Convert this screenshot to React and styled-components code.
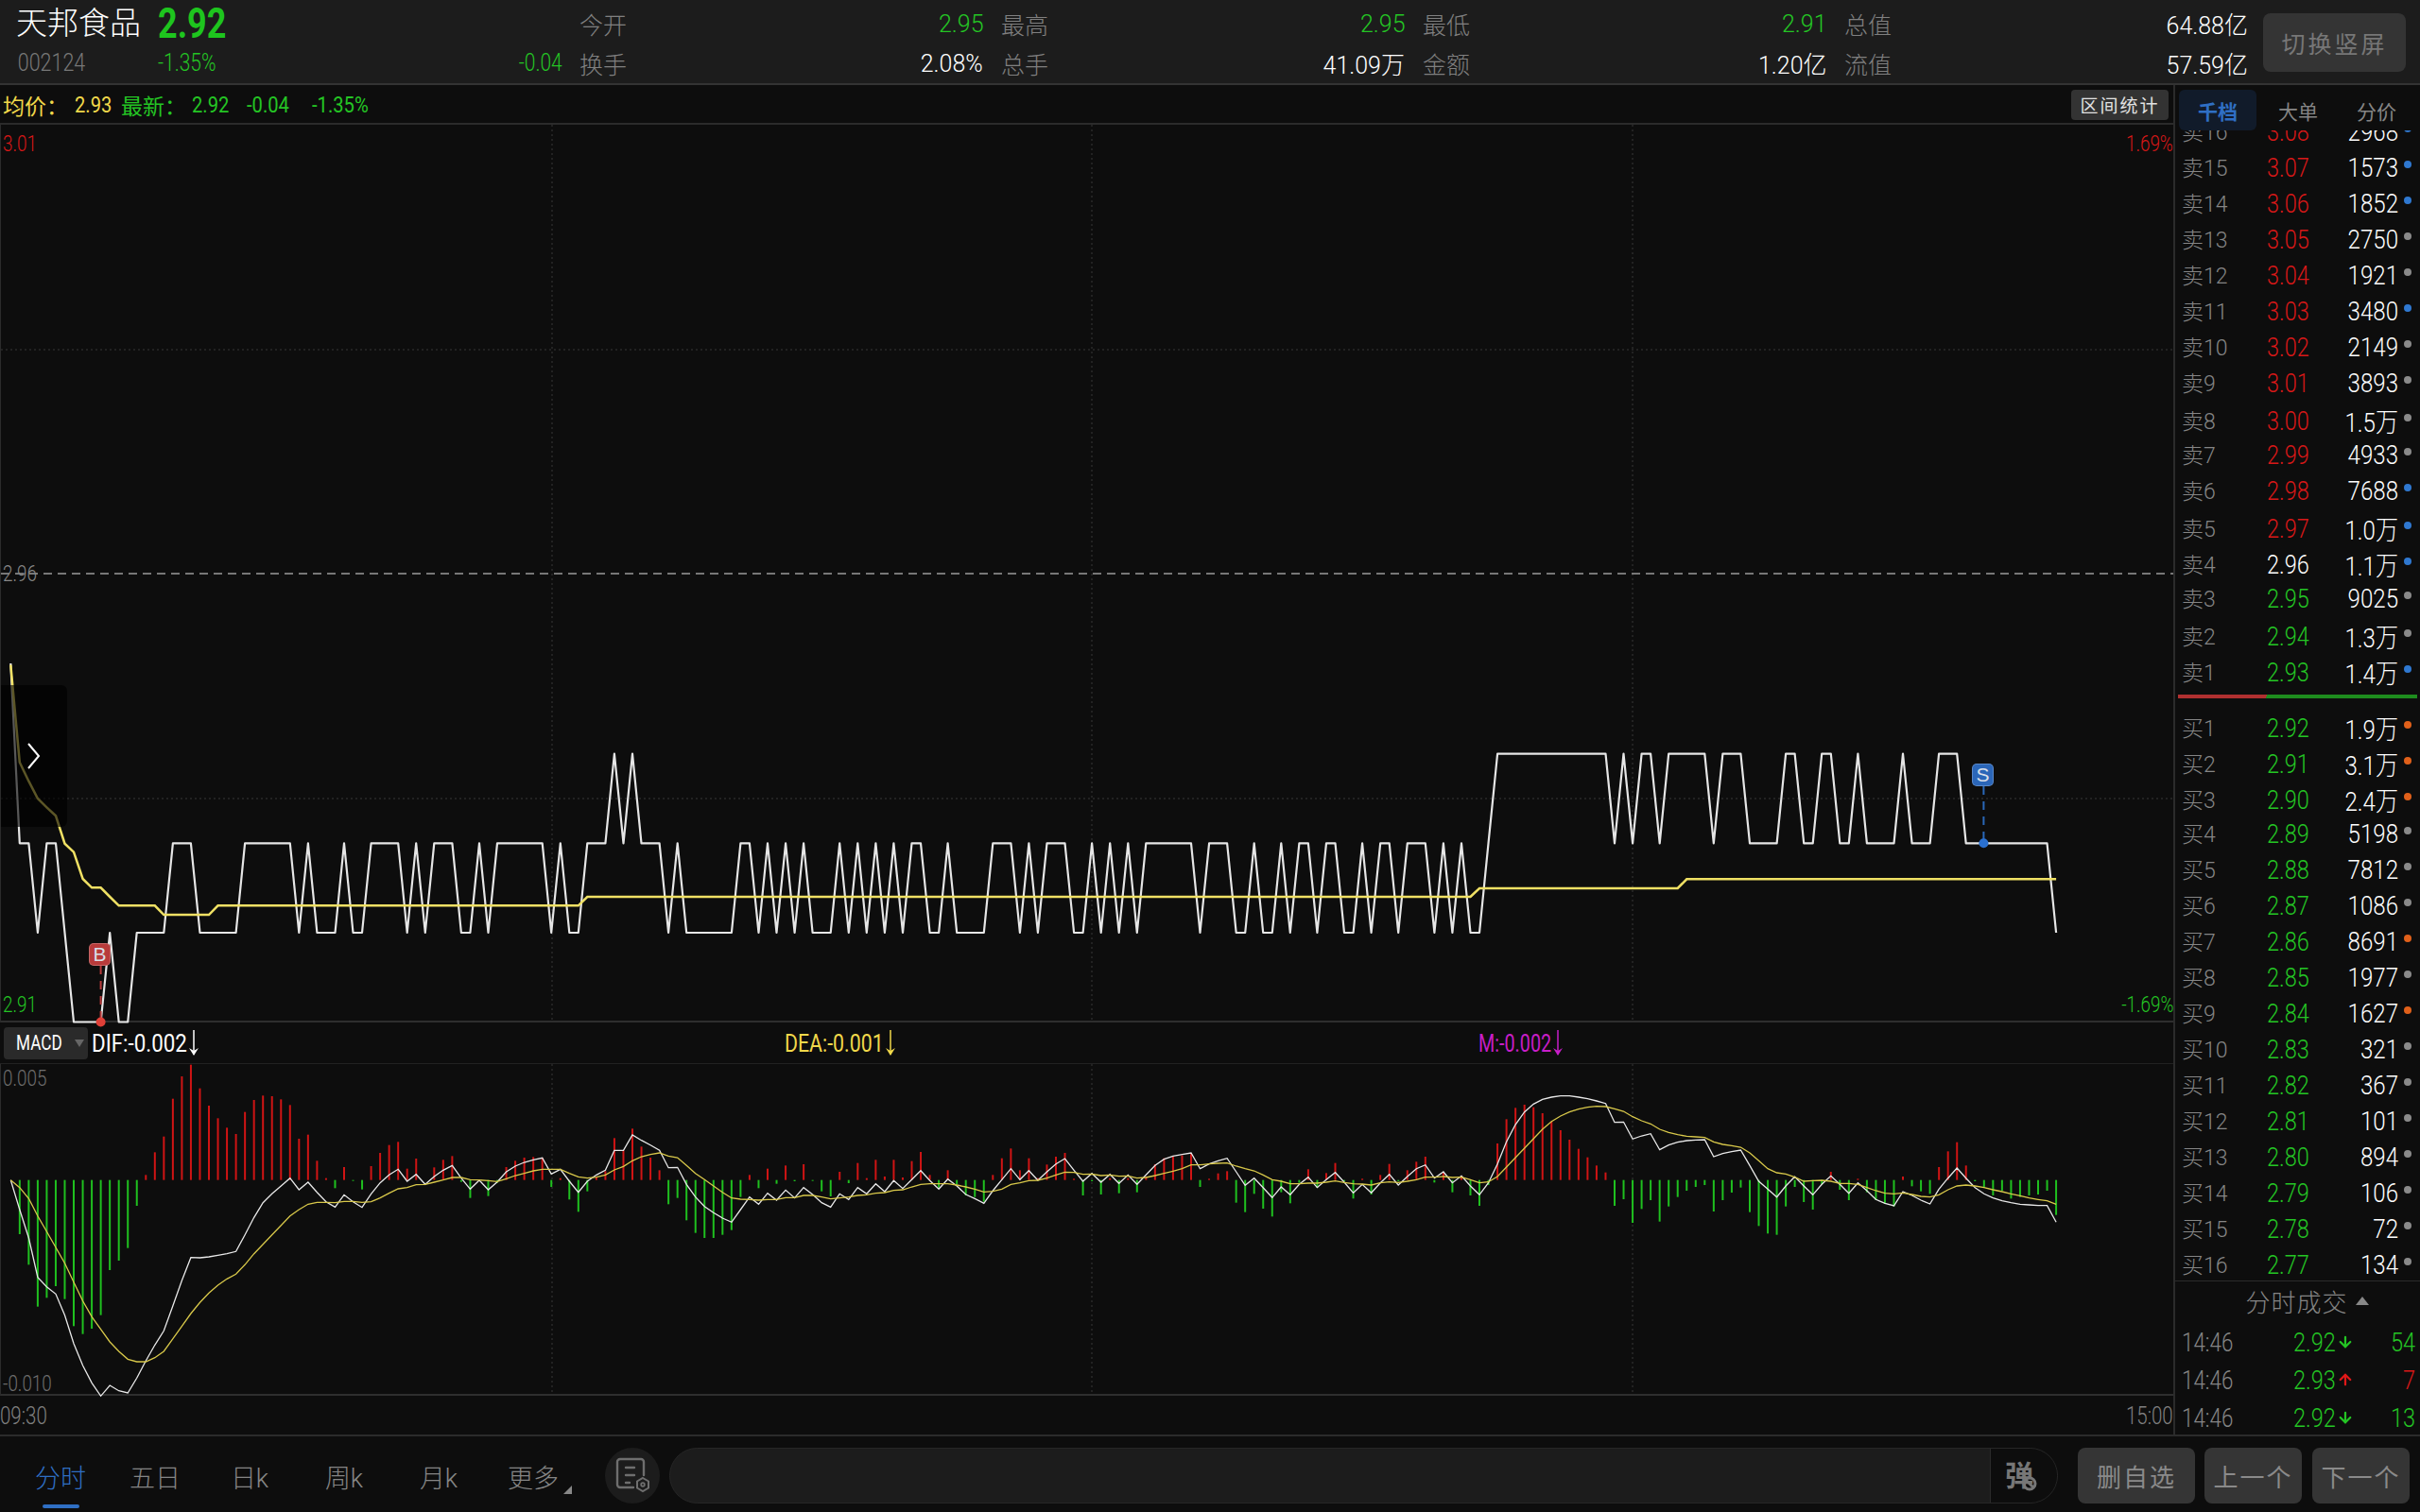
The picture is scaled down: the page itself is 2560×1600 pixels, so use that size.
import React from 'react';
import styled, { createGlobalStyle, css } from 'styled-components';
import { ArrowDown, ArrowUp } from 'lucide-react';

const FONT = 'Roboto, "Noto Sans CJK SC", sans-serif';
const GREEN = '#24c524';
const RED = '#d81818';
const GRAY = '#858585';
const BLUE = '#2f6fc4';

// the digits in this app are drawn much narrower than any installed font
const narrow = (origin = 'left', k = 0.84) => css`
  display: inline-block;
  transform: scaleX(${k});
  transform-origin: ${origin} center;
`;

const GlobalStyle = createGlobalStyle`
  html, body {
    margin: 0;
    background: #0d0d0d;
  }
  * {
    box-sizing: border-box;
  }
`;

const Page = styled.div`
  width: 2560px;
  height: 1600px;
  display: flex;
  flex-direction: column;
  overflow: hidden;
  background: #0d0d0d;
  color: #fff;
  font-family: ${FONT};
  font-weight: 300;
`;

/* top quote header */
const Header = styled.header`
  height: 90px;
  flex: none;
  display: flex;
  background: #1c1c1c;
  border-bottom: 2px solid #333;
`;

const NameBlock = styled.div`
  width: 613px;
  padding: 0 18px 0 17px;
  display: grid;
  grid-template-columns: 150px 1fr auto;
  grid-template-rows: 49px 35px;
  align-items: center;
`;

const StockName = styled.div`
  font-size: 33px;
  line-height: 1;
  white-space: nowrap;
`;

const BigPrice = styled.div`
  ${narrow('left', 0.8)}
  font-size: 45px;
  font-weight: 700;
  line-height: 1;
  color: #1ec51e;
  grid-column: 2 / 4;
`;

const Code = styled.div`
  ${narrow('left', 0.86)}
  font-size: 25px;
  color: #777;
  padding-left: 2px;
`;

const Quote = styled.div`
  ${(p) => narrow(p.$origin || 'right', p.$k || 0.96)}
  font-size: ${(p) => p.$size || 26}px;
  color: ${(p) => p.$color || '#fff'};
  white-space: nowrap;
`;

const Stats = styled.div`
  display: grid;
  grid-template-columns: repeat(4, 446px);
  grid-template-rows: 49px 35px;
  align-items: center;
`;

const Stat = styled.div`
  display: flex;
  justify-content: space-between;
  align-items: center;
  padding-right: 19px;
`;

const StatLabel = styled.span`
  font-size: 25px;
  color: #808080;
`;

const SwitchButton = styled.button`
  width: 151px;
  height: 62px;
  margin: 14px 0 0 -3px;
  border: 0;
  border-radius: 8px;
  background: #343434;
  color: #777;
  font-family: ${FONT};
  font-size: 25px;
  letter-spacing: 3px;
`;

/* middle: chart column + order book */
const Main = styled.main`
  height: 1428px;
  flex: none;
  display: flex;
`;

const ChartColumn = styled.section`
  width: 2299px;
  flex: none;
  display: flex;
  flex-direction: column;
`;

const InfoBar = styled.div`
  height: 42px;
  flex: none;
  display: grid;
  grid-template-columns: 76px 49px 75px 58px 69px 1fr auto;
  align-items: center;
  padding: 1px 5px 0 3px;
  border-bottom: 2px solid #2b2b2b;
`;

const InfoLabel = styled.span`
  font-size: 23px;
  font-weight: 400;
  color: ${(p) => p.$color};
  white-space: nowrap;
`;

const InfoValue = styled.span`
  ${narrow('left', 0.84)}
  font-size: 24px;
  font-weight: 400;
  color: ${(p) => p.$color};
  white-space: nowrap;
`;

const RangeButton = styled.button`
  grid-column: 7;
  width: 103px;
  height: 32px;
  padding: 0;
  border: 0;
  border-radius: 4px;
  background: #333;
  color: #e2e2e2;
  font-family: ${FONT};
  font-size: 19px;
  letter-spacing: 2px;
`;

const PriceChart = styled.div`
  position: relative;
  height: 950px;
  flex: none;
  border-left: 1px solid #2b2b2b;
  border-bottom: 2px solid #2e2e2e;
`;

const Drawing = styled.svg`
  display: block;
  overflow: visible;
`;

const AxisLabel = styled.span`
  ${(p) => narrow(p.$right ? 'right' : 'left', 0.82)}
  position: absolute;
  font-size: 23px;
  line-height: 1;
  color: ${(p) => p.$color};
  left: ${(p) => (p.$right ? 'auto' : '2px')};
  right: ${(p) => (p.$right ? '0' : 'auto')};
  top: ${(p) => p.$top}px;
`;

const Marker = styled.div`
  position: absolute;
  left: ${(p) => p.$left}px;
  top: ${(p) => p.$top}px;
  width: 23px;
  height: 24px;
  border: 1px solid rgba(255, 255, 255, 0.22);
  border-radius: 5px;
  background: ${(p) => p.$color};
  color: #d8dfe8;
  font-family: "Liberation Sans", sans-serif;
  font-size: 21px;
  font-weight: 400;
  line-height: 22px;
  text-align: center;
`;

const Handle = styled.div`
  position: absolute;
  left: 0;
  top: 593px;
  width: 70px;
  height: 150px;
  display: flex;
  align-items: center;
  justify-content: center;
  border-radius: 0 6px 6px 0;
  background: rgba(0, 0, 0, 0.62);
`;

const MacdBar = styled.div`
  height: 44px;
  flex: none;
  display: grid;
  grid-template-columns: 97px 733px 734px 1fr;
  align-items: center;
  border-bottom: 1px solid #222;
`;

const MacdSelect = styled.div`
  width: 89px;
  height: 34px;
  margin-left: 4px;
  display: flex;
  align-items: center;
  justify-content: space-between;
  padding: 0 6px 0 13px;
  border-radius: 4px;
  background: #2a2a2a;
`;

const MacdName = styled.span`
  ${narrow('left', 0.78)}
  font-size: 22px;
  font-weight: 400;
`;

const Caret = styled.span`
  width: 0;
  height: 0;
  border-left: 5px solid transparent;
  border-right: 5px solid transparent;
  border-top: 8px solid #666;
`;

const MacdValue = styled.div`
  display: flex;
  align-items: center;
  font-size: 26px;
  font-weight: 400;
  color: ${(p) => p.$color};

  svg {
    margin-left: ${(p) => p.$arrow}px;
  }
`;

const MacdText = styled.span`
  ${(p) => narrow('left', p.$k)}
  white-space: nowrap;
`;

const MacdChart = styled.div`
  position: relative;
  height: 351px;
  flex: none;
  border-left: 1px solid #2b2b2b;
  border-bottom: 2px solid #2e2e2e;
`;

const TimeBar = styled.div`
  height: 41px;
  flex: none;
  display: flex;
  justify-content: space-between;
  align-items: center;
  padding-top: 2px;
  font-size: 25px;
  color: #808080;
`;

const TimeLabel = styled.span`
  ${(p) => narrow(p.$right ? 'right' : 'left', 0.82)}
`;

const BookColumn = styled.aside`
  width: 261px;
  flex: none;
  display: flex;
  flex-direction: column;
  overflow: hidden;
  border-left: 2px solid #2b2b2b;
`;

const BookTabs = styled.div`
  height: 48px;
  flex: none;
  display: grid;
  grid-template-columns: 82px 88px 78px;
  padding: 5px 0 0 4px;
`;

const BookTab = styled.div`
  display: flex;
  align-items: center;
  justify-content: center;
  border-radius: 6px;
  background: ${(p) => (p.$active ? '#111b2a' : 'transparent')};
  color: ${(p) => (p.$active ? BLUE : GRAY)};
  font-size: 21px;
  font-weight: ${(p) => (p.$active ? 700 : 400)};
`;

const SellList = styled.div`
  height: 589px;
  flex: none;
  display: flex;
  flex-direction: column;
  justify-content: flex-end;
  overflow: hidden;
`;

const BuyList = styled.div`
  height: 608px;
  flex: none;
  border-bottom: 1px solid #2b2b2b;
`;

const BookRow = styled.div`
  height: 38px;
  flex: none;
  display: grid;
  grid-template-columns: 90px 50px 89px 1fr;
  align-items: center;
  padding-left: 7px;
  font-size: 28px;
`;

const BookLabel = styled.span`
  font-size: 23px;
  color: ${GRAY};
  white-space: nowrap;
`;

const BookPrice = styled.span`
  ${narrow('left', 0.84)}
  padding-top: 2px;
  color: ${(p) => p.$color};
`;

const BookVolume = styled.span`
  ${narrow('right', 0.86)}
  padding-top: 2px;
  text-align: right;
  white-space: nowrap;
`;

const Dot = styled.i`
  width: 8px;
  height: 8px;
  margin: 0 0 4px 6px;
  border-radius: 50%;
  background: ${(p) => p.$color};
`;

const SpreadBar = styled.div`
  height: 4px;
  flex: none;
  margin: 8px 3px 9px 3px;
  background: linear-gradient(105deg, #b03030 0 37%, #1e8c1e 37% 100%);
`;

const TradesTitle = styled.div`
  height: 44px;
  flex: none;
  display: flex;
  align-items: center;
  justify-content: center;
  gap: 8px;
  padding: 0 0 3px 20px;
  font-size: 26px;
  color: ${GRAY};
  letter-spacing: 1px;
`;

const UpCaret = styled.span`
  width: 0;
  height: 0;
  border-left: 7px solid transparent;
  border-right: 7px solid transparent;
  border-bottom: 9px solid #888;
`;

const TradeRow = styled.div`
  height: 40px;
  flex: none;
  display: grid;
  grid-template-columns: 118px 68px 1fr;
  align-items: center;
  padding: 0 5px 0 7px;
  font-size: 28px;
`;

const TradeTime = styled.span`
  ${narrow('left', 0.8)}
  color: ${GRAY};
`;

const TradePrice = styled.span`
  display: flex;
  align-items: center;
  color: ${GREEN};

  svg {
    margin-left: -7px;
  }
`;

const TradeNumber = styled.span`
  ${narrow('left', 0.84)}
`;

const TradeVolume = styled.span`
  ${narrow('right', 0.84)}
  text-align: right;
  color: ${(p) => p.$color};
`;

/* bottom bar */
const BottomBar = styled.footer`
  height: 82px;
  flex: none;
  display: flex;
  padding: 12px 0 0 14px;
  border-top: 2px solid #2b2b2b;
`;

const PeriodTabs = styled.nav`
  display: flex;
  margin-top: -12px;
`;

const PeriodTab = styled.div`
  position: relative;
  width: 100px;
  height: 82px;
  display: flex;
  align-items: center;
  justify-content: center;
  padding-top: 3px;
  font-size: 27px;
  color: ${(p) => (p.$active ? BLUE : GRAY)};

  ${(p) =>
    p.$active &&
    `&::after {
      content: '';
      position: absolute;
      left: 31px;
      bottom: 6px;
      width: 39px;
      height: 4px;
      border-radius: 2px;
      background: ${BLUE};
    }`}
`;

const MoreCorner = styled.span`
  position: absolute;
  right: 9px;
  bottom: 21px;
  width: 0;
  height: 0;
  border-left: 9px solid transparent;
  border-bottom: 9px solid #888;
`;

const NoteButton = styled.div`
  width: 58px;
  height: 59px;
  margin-left: 26px;
  display: flex;
  align-items: center;
  justify-content: center;
  border-radius: 50%;
  background: #1c1c1c;
  flex: none;
`;

const CommentBox = styled.div`
  width: 1469px;
  height: 59px;
  margin-left: 10px;
  flex: none;
  display: flex;
  justify-content: flex-end;
  overflow: hidden;
  border: 1px solid #262626;
  border-radius: 30px;
  background: #1c1c1c;
`;

const DanmuToggle = styled.div`
  position: relative;
  width: 71px;
  display: flex;
  align-items: center;
  justify-content: center;
  padding: 0 10px 5px 0;
  border-left: 1px solid #2b2b2b;
  background: #0d0d0d;
  color: #777;
  font-size: 30px;
  font-weight: 700;
`;

const DanmuOff = styled.svg`
  position: absolute;
  left: 33px;
  top: 29px;
`;

const ActionButton = styled.button`
  width: ${(p) => p.$width}px;
  height: 59px;
  margin-left: ${(p) => p.$gap}px;
  flex: none;
  border: 0;
  border-radius: 8px;
  background: #353535;
  color: #8a8a8a;
  font-family: ${FONT};
  font-size: 26px;
  letter-spacing: 2px;
`;

/* chart data, read off per minute */
const STEP = 9.532;
const xAt = (i) => 10.3 + i * STEP;
const LEVEL = { a: 570, b: 665.7, c: 760.3, d: 855, e: 949.5 };

const PRICE =
  'accdccdeeeedeedddd' + 'cccddddd' + 'cccccc' + 'dcdddcdd' + 'cccc' + 'dcd' + 'ccc' + 'ddcdc' + 'ccccc' + 'dcdd' + 'ccc' + 'bcb' + 'ccc' +
  'dcddddddcc' + 'dcdcdcdddc' + 'dcdcdcdccd' + 'dcddddcccd' + 'cdcccddcdc' + 'dcdccccccd' + 'cccddcddcd' + 'ccdccddcdc' + 'cdcc' +
  'cdcdcddc' + 'bbbbbbbbbbbbb' + 'cbcbbc' + 'bbbbb' + 'c' + 'bbb' + 'cccc' + 'bb' + 'cc' + 'bb' + 'cc' + 'b' + 'cccc' + 'b' + 'ccc' + 'bbb' + 'c' + 'ccccccccc' + 'd';

const pricePoints = PRICE.split('')
  .map((l, i) => `${xAt(i).toFixed(1)},${LEVEL[l]}`)
  .join(' ');

const AVG = [
  [0, 571.7], [1, 674.7], [2, 694.7], [3, 713], [4, 722.3], [5, 731.3], [6, 760.7], [7, 769.7], [8, 798], [9, 807.3], [10, 807.3], [11, 817],
  [12, 826.3], [16, 826.3], [17, 836], [22, 836], [23, 826.3], [63, 826.3], [64, 817], [162, 817], [163, 808], [185, 808], [186, 798.3], [227, 798.3],
];
const avgPoints = AVG.map(([i, y]) => `${xAt(i).toFixed(1)},${y}`).join(' ');

const BARS = [
  506, 678, 775, 908, 880, 843, 884, 970, 995, 978, 935, 792, 762, 722, 588, 490, 418, 368, 248, 177, 140, 215, 270, 310, 340, 360, 290, 252, 238, 240, 250, 268,
  375, 362, 445, 500, 532, 465, 509, 536, 462, 420, 395, 385, 470, 438, 506, 466, 442, 430, 512, 563, 510, 557, 515, 465, 445, 435, 433, 435, 528, 500, 568, 607,
  542, 495, 478, 373, 412, 343, 400, 435, 475,
  583, 563, 634, 674, 690, 690, 680, 665, 560, 490, 532, 470, 518, 460, 510, 456, 509, 542, 558, 480, 516, 452, 500, 442, 495, 442, 498, 446, 417, 490, 530, 475,
  520, 555, 560, 575, 490, 437, 406, 475, 437, 500, 457, 432, 420, 502, 555, 510, 552, 500, 548, 500, 545, 495, 456, 437, 430, 428, 420, 528, 502, 485, 478, 578,
  608, 550, 597, 622, 545, 580, 515, 472, 530, 484, 452, 510, 565, 502, 552, 490, 455, 510, 475, 448,
  432, 514, 480, 545, 492, 555, 588, 522, 390, 313, 277, 267, 275, 294, 320, 348, 378, 407, 434, 460, 482, 588, 567, 642, 598, 570, 638, 590, 560, 540, 528, 522,
  606, 570, 546, 530, 608, 652, 676, 680, 590, 528, 576, 600, 520, 480, 537, 570, 502, 545, 570, 582, 590, 495, 526, 542, 550, 465, 415, 386, 460, 510, 530, 555,
  540, 565, 560, 555, 552, 540, 617,
];

const DIF = [
  506, 600, 690, 815, 845, 868, 935, 1025, 1095, 1150, 1192, 1158, 1175, 1182, 1135, 1080, 1030, 985, 905, 825, 752, 753, 750, 745, 740, 733, 680, 625, 578, 550,
  525, 500, 537, 513, 545, 575, 592, 553, 575, 593, 550, 515, 490, 472, 510, 488, 520, 495, 475, 460, 500, 535, 507, 537, 512, 480, 462, 450, 442, 436, 487, 472,
  510, 545, 510, 490, 475, 412, 412, 363, 380, 395, 412,
  467, 466, 520, 560, 590, 610, 627, 640, 600, 560, 583, 548, 570, 538, 563, 530, 552, 578, 592, 550, 568, 530, 550, 518, 543, 508, 533, 505, 476, 508, 535, 503,
  525, 552, 565, 580, 540, 505, 470, 505, 476, 507, 480, 455, 438, 475, 510, 485, 513, 488, 517, 490, 520, 490, 460, 440, 430, 425, 420, 470, 455, 445, 437, 480,
  523, 500, 530, 562, 528, 553, 520, 497, 530, 505, 482, 513, 547, 520, 547, 515, 488, 522, 495, 470,
  458, 500, 480, 515, 493, 525, 553, 515, 455, 385, 330, 290, 265, 250, 243, 239, 239, 243, 248, 255, 263, 323, 322, 376, 366, 359, 410, 395, 386, 381, 379, 378,
  432, 422, 416, 411, 460, 510, 535, 560, 525, 496, 525, 553, 520, 493, 520, 548, 515, 540, 568, 580, 588, 543, 555, 570, 582, 535, 500, 468, 500, 530, 550, 563,
  572, 578, 583, 585, 587, 587, 640,
];

const DEA = [
  506, 530, 565, 620, 670, 720, 770, 830, 890, 940, 980, 1020, 1050, 1075, 1083, 1083, 1070, 1050, 1010, 970, 930, 895, 865, 840, 820, 805, 775, 740, 710, 680,
  650, 620, 600, 583, 577, 577, 578, 574, 574, 577, 575, 563, 548, 534, 530, 521, 520, 513, 506, 498, 498, 505, 506, 508, 511, 502, 492, 485, 477, 472, 472, 472,
  485, 496, 500, 497, 490, 474, 463, 445, 432, 425, 420,
  430, 435, 460, 485, 505, 525, 545, 563, 567, 568, 570, 568, 568, 562, 562, 555, 555, 560, 566, 563, 560, 555, 553, 548, 546, 539, 537, 528, 520, 518, 518, 518,
  522, 528, 535, 544, 542, 535, 520, 515, 508, 507, 500, 490, 481, 482, 488, 487, 492, 490, 494, 493, 500, 498, 492, 485, 478, 470, 458, 458, 455, 453, 452, 462,
  470, 477, 490, 505, 510, 518, 518, 516, 516, 513, 509, 514, 518, 519, 522, 515, 512, 514, 510, 505,
  497, 497, 495, 498, 497, 505, 515, 512, 495, 465, 435, 405, 375, 345, 320, 303, 290, 281, 275, 272, 273, 280, 288, 305, 318, 328, 345, 355, 362, 367, 369, 371,
  385, 393, 397, 402, 420, 445, 470, 483, 487, 497, 510, 508, 507, 510, 517, 517, 520, 530, 540, 548, 550, 547, 552, 558, 560, 553, 537, 525, 522, 525, 530, 537,
  543, 550, 556, 563, 568, 572, 583,
];

// readings are in crop units, 3 per px, from y=1080 on the page
const macdY = (v) => v / 3 - 46;
const macdLine = (values) => values.map((v, i) => `${xAt(i).toFixed(1)},${macdY(v).toFixed(1)}`).join(' ');
const ZERO = macdY(506);

const GRID_X = [583, 1154, 1726];
const GRID_Y = [238, 713];

const SELLS = [
  ['卖16', '3.08', '2968', 'b'], ['卖15', '3.07', '1573', 'b'], ['卖14', '3.06', '1852', 'b'], ['卖13', '3.05', '2750', 'g'],
  ['卖12', '3.04', '1921', 'g'], ['卖11', '3.03', '3480', 'b'], ['卖10', '3.02', '2149', 'g'], ['卖9', '3.01', '3893', 'g'],
  ['卖8', '3.00', '1.5万', 'g'], ['卖7', '2.99', '4933', 'g'], ['卖6', '2.98', '7688', 'b'], ['卖5', '2.97', '1.0万', 'b'],
  ['卖4', '2.96', '1.1万', 'b'], ['卖3', '2.95', '9025', 'g'], ['卖2', '2.94', '1.3万', 'g'], ['卖1', '2.93', '1.4万', 'b'],
];

const BUYS = [
  ['买1', '2.92', '1.9万', 'o'], ['买2', '2.91', '3.1万', 'o'], ['买3', '2.90', '2.4万', 'o'], ['买4', '2.89', '5198', 'g'],
  ['买5', '2.88', '7812', 'g'], ['买6', '2.87', '1086', 'g'], ['买7', '2.86', '8691', 'o'], ['买8', '2.85', '1977', 'g'],
  ['买9', '2.84', '1627', 'o'], ['买10', '2.83', '321', 'g'], ['买11', '2.82', '367', 'g'], ['买12', '2.81', '101', 'g'],
  ['买13', '2.80', '894', 'g'], ['买14', '2.79', '106', 'g'], ['买15', '2.78', '72', 'g'], ['买16', '2.77', '134', 'g'],
];

const DOT = { b: '#2f78d0', g: '#8a8a8a', o: '#e0601a' };

const priceColor = (p) => {
  const n = parseFloat(p);
  if (n > 2.96) return RED;
  if (n < 2.96) return GREEN;
  return '#fff';
};

const LongArrow = ({ color }) => (
  <svg width="12" height="28" viewBox="0 0 12 28" fill="none" stroke={color} strokeWidth="1.5">
    <path d="M6 0V26" />
    <path d="M1 19L6 27L11 19L6 22Z" fill={color} stroke="none" />
  </svg>
);

const Row = ({ row }) => (
  <BookRow>
    <BookLabel>{row[0]}</BookLabel>
    <BookPrice $color={priceColor(row[1])}>{row[1]}</BookPrice>
    <BookVolume>{row[2]}</BookVolume>
    <Dot $color={DOT[row[3]]} />
  </BookRow>
);

const Grid = ({ height }) => (
  <g stroke="#2a2a2a" strokeWidth="1.5" strokeDasharray="2 3">
    {GRID_X.map((x) => (
      <line key={x} x1={x} y1="0" x2={x} y2={height} />
    ))}
  </g>
);

const App = () => {
  return (
    <Page>
      <GlobalStyle />
      <Header>
        <NameBlock>
          <StockName>天邦食品</StockName>
          <BigPrice>2.92</BigPrice>
          <Code>002124</Code>
          <Quote $color={GREEN} $size={25} $origin="left" $k={0.84}>-1.35%</Quote>
          <Quote $color={GREEN} $size={25} $k={0.84}>-0.04</Quote>
        </NameBlock>
        <Stats>
          <Stat><StatLabel>今开</StatLabel><Quote $color={GREEN}>2.95</Quote></Stat>
          <Stat><StatLabel>最高</StatLabel><Quote $color={GREEN}>2.95</Quote></Stat>
          <Stat><StatLabel>最低</StatLabel><Quote $color={GREEN}>2.91</Quote></Stat>
          <Stat><StatLabel>总值</StatLabel><Quote>64.88亿</Quote></Stat>
          <Stat><StatLabel>换手</StatLabel><Quote>2.08%</Quote></Stat>
          <Stat><StatLabel>总手</StatLabel><Quote>41.09万</Quote></Stat>
          <Stat><StatLabel>金额</StatLabel><Quote>1.20亿</Quote></Stat>
          <Stat><StatLabel>流值</StatLabel><Quote>57.59亿</Quote></Stat>
        </Stats>
        <SwitchButton>切换竖屏</SwitchButton>
      </Header>

      <Main>
        <ChartColumn>
          <InfoBar>
            <InfoLabel $color="#f0d84a">均价：</InfoLabel>
            <InfoValue $color="#f0d84a">2.93</InfoValue>
            <InfoLabel $color={GREEN}>最新：</InfoLabel>
            <InfoValue $color={GREEN}>2.92</InfoValue>
            <InfoValue $color={GREEN}>-0.04</InfoValue>
            <InfoValue $color={GREEN}>-1.35%</InfoValue>
            <RangeButton>区间统计</RangeButton>
          </InfoBar>

          <PriceChart>
            <Drawing width="2298" height="948" viewBox="0 0 2298 948">
              <Grid height={948} />
              <g stroke="#2a2a2a" strokeWidth="1.5" strokeDasharray="2 3">
                {GRID_Y.map((y) => (
                  <line key={y} x1="0" y1={y} x2="2298" y2={y} />
                ))}
              </g>
              <line x1="0" y1="475" x2="2298" y2="475" stroke="#777" strokeWidth="2" strokeDasharray="9 6" />
              <polyline points={pricePoints} fill="none" stroke="#e6e6e6" strokeWidth="2.2" strokeLinejoin="round" />
              <polyline points={avgPoints} fill="none" stroke="#efe064" strokeWidth="2.5" />
              <line x1="105.6" y1="890" x2="105.6" y2="949" stroke="#b83b3b" strokeWidth="2" strokeDasharray="9 7" />
              <circle cx="105.6" cy="949.5" r="5" fill="#e04038" />
              <line x1="2097.4" y1="700" x2="2097.4" y2="760" stroke="#2a68b8" strokeWidth="2" strokeDasharray="9 7" />
              <circle cx="2097.4" cy="760.3" r="5" fill="#2a70d0" />
            </Drawing>
            <AxisLabel $color={RED} $top={9}>3.01</AxisLabel>
            <AxisLabel $color={RED} $top={9} $right>1.69%</AxisLabel>
            <AxisLabel $color="#888" $top={464}>2.96</AxisLabel>
            <AxisLabel $color={GREEN} $top={920}>2.91</AxisLabel>
            <AxisLabel $color={GREEN} $top={920} $right>-1.69%</AxisLabel>
            <Handle>
              <svg width="14" height="28" viewBox="0 0 14 28" fill="none" stroke="#fff" strokeWidth="2">
                <path d="M1 1L12 14L1 27" />
              </svg>
            </Handle>
            <Marker $left={93} $top={866} $color="#b83b3b">B</Marker>
            <Marker $left={2085} $top={676} $color="#2b66b8">S</Marker>
          </PriceChart>

          <MacdBar>
            <MacdSelect><MacdName>MACD</MacdName><Caret /></MacdSelect>
            <MacdValue $color="#fff" $arrow={-15}><MacdText $k={0.86}>DIF:-0.002</MacdText><LongArrow color="#fff" /></MacdValue>
            <MacdValue $color="#f0d84a" $arrow={-22}><MacdText $k={0.82}>DEA:-0.001</MacdText><LongArrow color="#f0d84a" /></MacdValue>
            <MacdValue $color="#c81ec8" $arrow={-24}><MacdText $k={0.76}>M:-0.002</MacdText><LongArrow color="#c81ec8" /></MacdValue>
          </MacdBar>

          <MacdChart>
            <Drawing width="2298" height="349" viewBox="0 0 2298 349">
              <Grid height={349} />
              {BARS.map((v, i) =>
                v === 506 ? null : (
                  <line
                    key={i}
                    x1={xAt(i)}
                    x2={xAt(i)}
                    y1={ZERO}
                    y2={macdY(v)}
                    stroke={v < 506 ? '#d01414' : '#1fc01f'}
                    strokeWidth="2"
                  />
                )
              )}
              <polyline points={macdLine(DIF)} fill="none" stroke="#e8e8e8" strokeWidth="1.3" />
              <polyline points={macdLine(DEA)} fill="none" stroke="#d8c84a" strokeWidth="1.3" />
            </Drawing>
            <AxisLabel $color="#6e6e6e" $top={4}>0.005</AxisLabel>
            <AxisLabel $color="#6e6e6e" $top={327}>-0.010</AxisLabel>
          </MacdChart>

          <TimeBar>
            <TimeLabel>09:30</TimeLabel>
            <TimeLabel $right>15:00</TimeLabel>
          </TimeBar>
        </ChartColumn>

        <BookColumn>
          <BookTabs>
            <BookTab $active>千档</BookTab>
            <BookTab>大单</BookTab>
            <BookTab>分价</BookTab>
          </BookTabs>
          <SellList>
            {SELLS.map((row) => (
              <Row key={row[0]} row={row} />
            ))}
          </SellList>
          <SpreadBar />
          <BuyList>
            {BUYS.map((row) => (
              <Row key={row[0]} row={row} />
            ))}
          </BuyList>
          <TradesTitle>分时成交<UpCaret /></TradesTitle>
          <TradeRow>
            <TradeTime>14:46</TradeTime>
            <TradePrice><TradeNumber>2.92</TradeNumber><ArrowDown size={18} strokeWidth={3} color={GREEN} /></TradePrice>
            <TradeVolume $color={GREEN}>54</TradeVolume>
          </TradeRow>
          <TradeRow>
            <TradeTime>14:46</TradeTime>
            <TradePrice><TradeNumber>2.93</TradeNumber><ArrowUp size={18} strokeWidth={3} color="#e01818" /></TradePrice>
            <TradeVolume $color={RED}>7</TradeVolume>
          </TradeRow>
          <TradeRow>
            <TradeTime>14:46</TradeTime>
            <TradePrice><TradeNumber>2.92</TradeNumber><ArrowDown size={18} strokeWidth={3} color={GREEN} /></TradePrice>
            <TradeVolume $color={GREEN}>13</TradeVolume>
          </TradeRow>
        </BookColumn>
      </Main>

      <BottomBar>
        <PeriodTabs>
          <PeriodTab $active>分时</PeriodTab>
          <PeriodTab>五日</PeriodTab>
          <PeriodTab>日k</PeriodTab>
          <PeriodTab>周k</PeriodTab>
          <PeriodTab>月k</PeriodTab>
          <PeriodTab>更多<MoreCorner /></PeriodTab>
        </PeriodTabs>
        <NoteButton>
          <svg width="38" height="40" viewBox="0 0 38 40" fill="none" stroke="#6e6e6e" strokeWidth="2.4" strokeLinecap="round">
            <path d="M20 32H6a3 3 0 0 1-3-3V5a3 3 0 0 1 3-3h22a3 3 0 0 1 3 3v14" />
            <path d="M12 11h9M12 19h9M12 27h4" />
            <path d="M30 22l6 3.500v7L30 36l-6-3.500v-7z" strokeWidth="2" />
            <circle cx="30" cy="29" r="1.800" strokeWidth="1.800" />
          </svg>
        </NoteButton>
        <CommentBox>
          <DanmuToggle>
            弹
            <DanmuOff width="16" height="16" viewBox="0 0 16 16" fill="none" stroke="#777" strokeWidth="3">
              <circle cx="8" cy="8" r="6" />
              <path d="M4 4L12 12" />
            </DanmuOff>
          </DanmuToggle>
        </CommentBox>
        <ActionButton $width={124} $gap={21}>删自选</ActionButton>
        <ActionButton $width={103} $gap={10}>上一个</ActionButton>
        <ActionButton $width={103} $gap={11}>下一个</ActionButton>
      </BottomBar>
    </Page>
  );
};

export default App;
